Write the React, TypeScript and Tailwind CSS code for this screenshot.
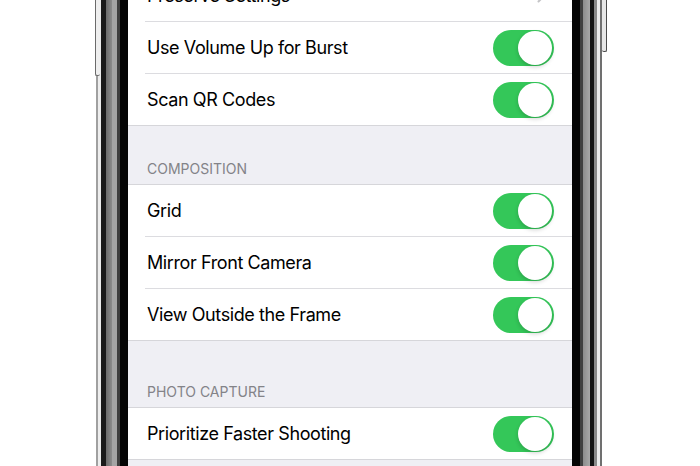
import React from "react";

const font = { fontFamily: "Inter, 'Noto Sans', sans-serif" };

function Toggle() {
  return (
    <div className="relative h-[36px] w-[61px] shrink-0 rounded-full bg-[#34c759]">
      <div className="absolute right-[2px] top-[1px] h-[34px] w-[34px] rounded-full bg-white shadow-[0_2px_4px_rgba(0,0,0,0.18)]" />
    </div>
  );
}

function Row({ label, last, chevron }: { label: string; last?: boolean; chevron?: boolean }) {
  return (
    <div className={`flex h-[52px] ${last ? "border-b border-[#d6d6da]" : ""}`}>
      <div className={`ml-[17px] flex flex-1 items-center justify-between pr-[18px] ${last ? "" : "border-b border-[#dcdce0]"}`}>
        <span className="ml-[2px] text-[18px] tracking-[-0.4px] text-black">{label}</span>
        {chevron ? (
          <svg width="9" height="15" viewBox="0 0 9 15" className="mr-[8px]">
            <path d="M1.5 1.5 L7.5 7.5 L1.5 13.5" fill="none" stroke="#c4c4c7" strokeWidth="2" strokeLinecap="round" strokeLinejoin="round" />
          </svg>
        ) : (
          <Toggle />
        )}
      </div>
    </div>
  );
}

function Header({ text, h }: { text: string; h: string }) {
  return (
    <div className={`flex ${h} items-end border-b border-[#d6d6da] pb-[7px] pl-[19px]`}>
      <span className="text-[14px] leading-[17px] tracking-[0px] text-[#838388]">{text}</span>
    </div>
  );
}

const LEFT: [string, string][] = [
  ["w-[2px]", "bg-[#a0a0a0]"],
  ["w-[3px]", "bg-[#ededed]"],
  ["w-[5px]", "bg-[#1a1a1a]"],
  ["w-[6px]", "bg-[linear-gradient(to_right,#6c6c6c,#8c8c8c)]"],
  ["w-[5px]", "bg-[#a5a5a5]"],
  ["w-[3px]", "bg-[#404040]"],
  ["w-[8px]", "bg-[#050505]"],
];

const RIGHT: [string, string][] = [
  ["w-[8px]", "bg-[#050505]"],
  ["w-[3px]", "bg-[#404040]"],
  ["w-[7px]", "bg-[linear-gradient(to_right,#8c8c8c,#a8a8a8)]"],
  ["w-[4px]", "bg-[#151515]"],
  ["w-[3px]", "bg-[#8a8a8a]"],
  ["w-[3px]", "bg-[#ededed]"],
  ["w-[2px]", "bg-[#707070]"],
];

function Stripes({ cols }: { cols: [string, string][] }) {
  return (
    <div className="flex h-full">
      {cols.map(([w, bg], i) => (
        <div key={i} className={`${w} h-full ${bg}`} />
      ))}
    </div>
  );
}

export default function App() {
  return (
    <div className="flex h-[466px] w-[700px] overflow-hidden bg-white pl-[96px]" style={font}>
      <div className="relative flex h-full">
        <Stripes cols={LEFT} />
        <div className="h-full w-[444px] overflow-hidden bg-[#efeff4]">
          <div className="-mt-[30px]">
            <div className="bg-white">
              <Row label="Preserve Settings" chevron />
              <Row label="Use Volume Up for Burst" />
              <Row label="Scan QR Codes" last />
            </div>
            <Header text="COMPOSITION" h="h-[59px]" />
            <div className="bg-white">
              <Row label="Grid" />
              <Row label="Mirror Front Camera" />
              <Row label="View Outside the Frame" last />
            </div>
            <Header text="PHOTO CAPTURE" h="h-[67px]" />
            <div className="bg-white">
              <Row label="Prioritize Faster Shooting" last />
            </div>
          </div>
        </div>
        <Stripes cols={RIGHT} />
        {/* volume button */}
        <div className="absolute left-[-1px] top-0 h-[76px] w-[5px] rounded-b-[2px] border-b border-l border-[#6a6a6a] bg-[#eeeeee]" />
        {/* side button */}
        <div className="absolute right-[-5px] top-0 h-[52px] w-[5px] rounded-b-[2px] border-b border-r border-[#4a4a4a] bg-[#e6e6e6]" />
      </div>
    </div>
  );
}
